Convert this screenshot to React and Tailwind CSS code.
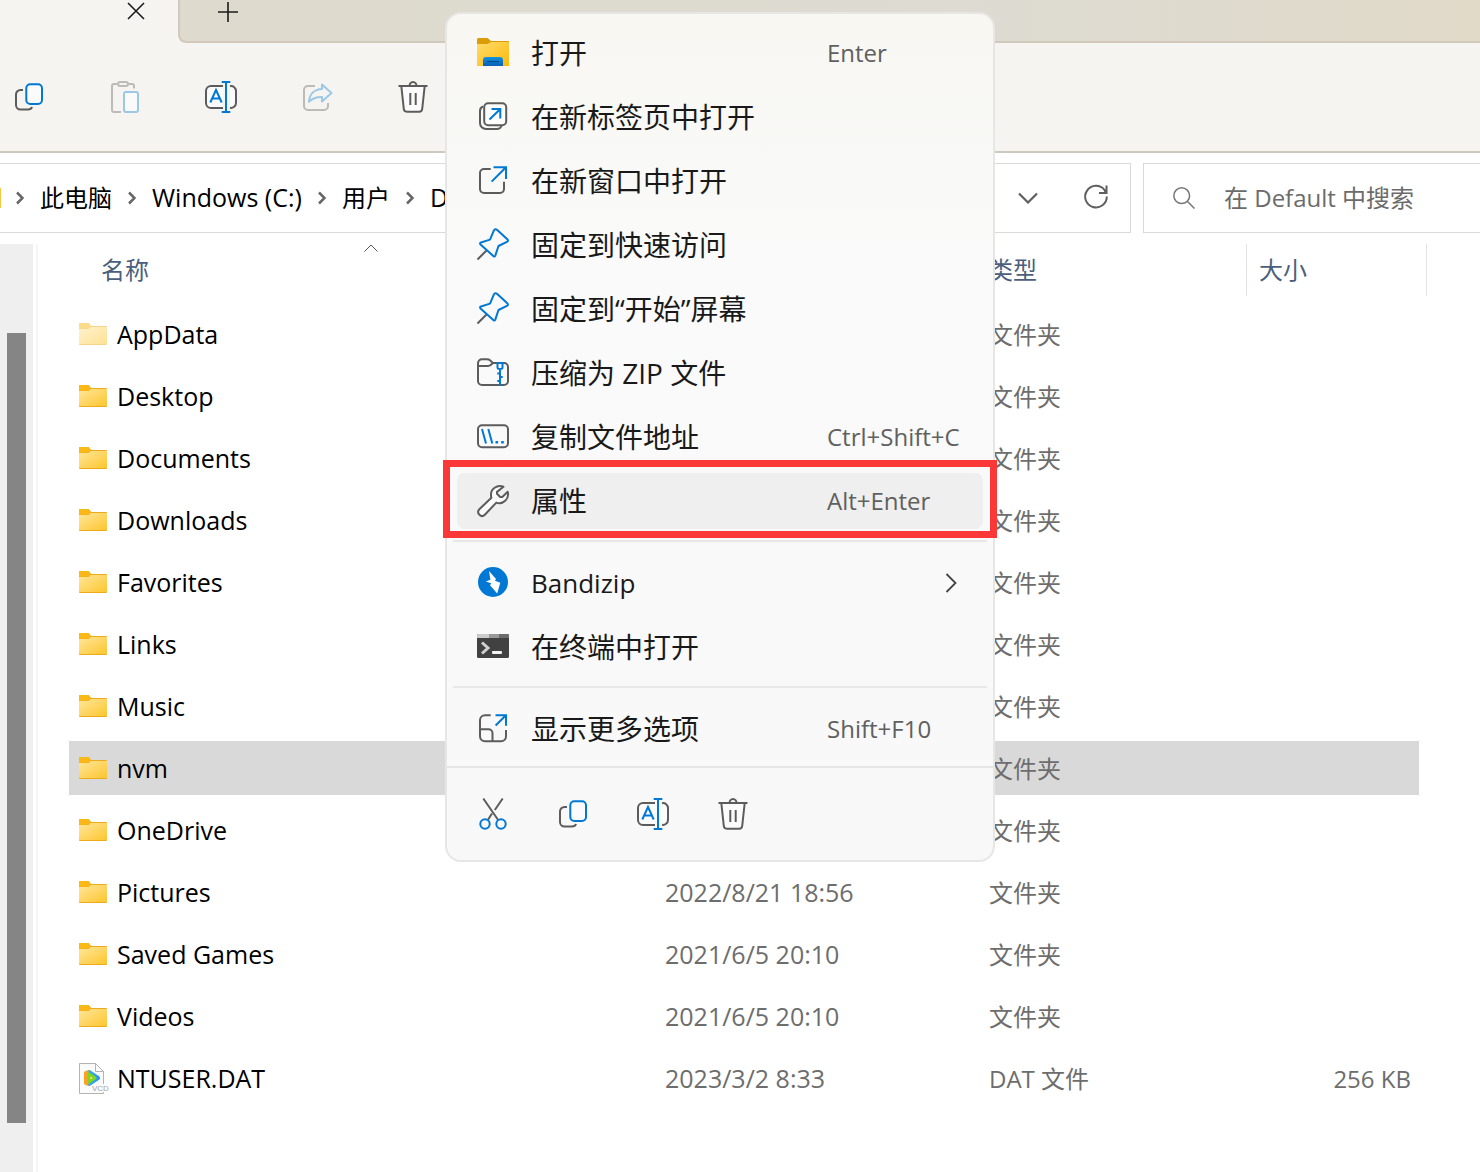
import { useState } from "react";

const GREY = "#5c5c5c";
const BLUE = "#0078d4";

function Icon({ children, className = "size-8" }) {
  return (
    <svg
      viewBox="0 0 32 32"
      className={`${className} shrink-0 overflow-visible`}
      fill="none"
      stroke={GREY}
      strokeWidth="2"
      aria-hidden="true"
    >
      {children}
    </svg>
  );
}

const CopyIcon = () => (
  <Icon>
    <path d="M10 9H7.500a4.500 4.500 0 0 0-4.500 4.500V24a4.500 4.500 0 0 0 4.500 4.500H15c2 0 3.500-1 4-2.500" />
    <rect x="13.300" y="3.300" width="15.700" height="19.700" rx="4" stroke={BLUE} fill="#fbfbfb" />
  </Icon>
);

const PasteIcon = () => (
  <Icon>
    <g stroke="#bdbbb8">
      <path d="M8 3H5a2 2 0 0 0-2 2v24a2 2 0 0 0 2 2h7M20 3h3a2 2 0 0 1 2 2v2.500" />
      <rect x="9" y="1" width="10" height="4" rx="2" />
    </g>
    <rect x="15" y="11" width="14" height="20" rx="2" stroke="#9cc8e8" fill="#fafafa" />
  </Icon>
);

const RenameIcon = () => (
  <Icon>
    <path d="M18 5H6a5 5 0 0 0-5 5v12a5 5 0 0 0 5 5h12M25 5.200a5 5 0 0 1 6 5V22a5 5 0 0 1-6 4.800" fill="#fbfbfb" />
    <g stroke={BLUE}>
      <path d="M5.300 21.500 11 9l5.700 12.500M7.300 17.500h7.400" />
      <path d="M21 1v30M16.700 1h8.600M16.700 31h8.600" />
    </g>
  </Icon>
);

const ShareIcon = () => (
  <Icon>
    <path d="M14 5H7a4 4 0 0 0-4 4v16a4 4 0 0 0 4 4h16a4 4 0 0 0 4-4v-3" stroke="#bdbbb8" />
    <path
      d="M21 3.500 30.500 12 21 20.500V16c-5.500-.3-9.500 1.500-13 4.800C8.500 13.500 13 8.300 21 8z"
      stroke="#9cc8e8"
      strokeLinejoin="round"
    />
  </Icon>
);

const TrashIcon = () => (
  <Icon>
    <path d="m4.300 5 2.500 23a3 3 0 0 0 3 2.700h12.400a3 3 0 0 0 3-2.700l2.500-23" fill="#fbfbfb" />
    <path d="M1.500 5h29M12.500 5a3.500 4 0 0 1 7 0M13.300 12v12M18.700 12v12" />
  </Icon>
);

const CutIcon = () => (
  <Icon>
    <path d="m6.300.500 14.700 21.300M25.700.500 17.800 12M15 15.500l-4 6.300" />
    <g stroke={BLUE}>
      <circle cx="8" cy="26" r="4.700" />
      <circle cx="24" cy="26" r="4.700" />
    </g>
  </Icon>
);

const ExplorerIcon = () => (
  <Icon>
    <defs>
      <linearGradient id="explorer" x1="0" y1="0" x2="1" y2="1">
        <stop offset="0" stopColor="#ffdc6d" />
        <stop offset="1" stopColor="#fdb90a" />
      </linearGradient>
      <linearGradient id="tray" x1="0" y1="0" x2="0" y2="1">
        <stop offset="0" stopColor="#1592df" />
        <stop offset="1" stopColor="#0661b4" />
      </linearGradient>
    </defs>
    <g stroke="none">
      <path d="M0 2.500A1.500 1.500 0 0 1 1.500 1H10.500L14 4H31a1 1 0 0 1 1 1v4H0z" fill="#dd9c05" />
      <path d="M0 7h10.500L14 5h17a1 1 0 0 1 1 1v23H0z" fill="url(#explorer)" />
      <path d="M6 29v-6a3 3 0 0 1 3-3h14a3 3 0 0 1 3 3v6z" fill="url(#tray)" />
      <path d="M10 24h12v1.200H10z" fill="#074f91" />
    </g>
  </Icon>
);

const NewTabIcon = () => (
  <Icon>
    <path d="M6 5.500C4 6.300 3 7.800 3 10v12a6 6 0 0 0 6 6h11c2 0 3.700-1 4.500-3" />
    <rect x="7.200" y="2.200" width="22" height="22" rx="4" fill="#fdfdfd" />
    <path d="M12.500 18.500 23.300 8M14.500 8h8.800v9.500" stroke={BLUE} />
  </Icon>
);

const NewWindowIcon = () => (
  <Icon>
    <path d="M13.700 4H7a4 4 0 0 0-4 4v16a4 4 0 0 0 4 4h16a4 4 0 0 0 4-4v-7.300" />
    <path d="M14.600 16.600 29 2.300M16.500 2.200H29V14" stroke={BLUE} />
  </Icon>
);

const PinIcon = () => (
  <Icon>
    <path d="m.500 30.500 9-9" />
    <path
      d="M20 .8 30.300 10.300c1 1 .8 2-.4 2.500L21.500 17 18.300 26.600c-.4 1-1.200 1.200-2 .4L3.500 15.500c-.8-.8-.5-1.700.5-2L13 10.600l3.800-9c.7-1.500 2-1.800 3.200-.8z"
      stroke={BLUE}
      strokeLinejoin="round"
    />
  </Icon>
);

const ZipIcon = () => (
  <Icon>
    <path d="M1 6v18a4 4 0 0 0 4 4h22a4 4 0 0 0 4-4V10a4 4 0 0 0-4-4H16l-3-2.800C12 2.400 11.500 2.200 10 2.200H5a4 4 0 0 0-4 4z" />
    <path d="M1 9h10c1.500 0 2-.3 3-1.200L16 6" />
    <g stroke={BLUE}>
      <path d="M20.500 5v5.500c0 1 .8 1.500 2.500 1.500s2.500-.5 2.500-1.500V5M20 6h6M23 12v17" />
      <path d="M20.300 16.500H23M23 20h2.700M20.300 24H23" />
    </g>
  </Icon>
);

const CopyPathIcon = () => (
  <Icon>
    <rect x="1" y="4.200" width="30" height="22" rx="4" />
    <path d="m5 8 4 14.500M11.300 8l4 14.500" stroke={BLUE} />
    <path d="M18.500 21.300h2.600M24.200 21.300h2.600" stroke={BLUE} strokeWidth="2.600" />
  </Icon>
);

const WrenchIcon = () => (
  <Icon>
    <path
      d="M26.500 1.800C20 -.8 13.500 4 14 10.300c0 1 .1 1.700.4 2.500L2.300 24.300c-3.300 3.600 1.800 9 5.500 5.500L19.300 17.600C26 20 32.600 14 30.700 6.700L25.300 12h-2.100L20 8.800V6.900z"
      fill="#fbfbfb"
      strokeLinejoin="round"
    />
  </Icon>
);

const BandizipIcon = () => (
  <Icon>
    <circle cx="16" cy="15" r="15" fill={BLUE} stroke="none" />
    <path d="M12 4 19 12l-1 1.800 5.300 2L20.200 26.500 13 18.300l1.200-2L8.800 14.500l4.600-1.700z" fill="#fff" stroke="none" />
  </Icon>
);

const TerminalIcon = () => (
  <Icon>
    <g stroke="none">
      <rect y="3" width="32" height="24" rx="1.500" fill="#414141" />
      <path d="M0 7V4.500A1.500 1.500 0 0 1 1.500 3H12v4z" fill="#cbcbcb" />
      <path d="M12 3h10v4H12z" fill="#999" />
      <path d="M22 3h8.500A1.500 1.500 0 0 1 32 4.500V7H22z" fill="#6c6c6c" />
      <rect x="15" y="20" width="10" height="3" rx="1" fill="#f2f2f2" />
    </g>
    <path d="m5 11.500 6 5.500-6 5.500" stroke="#d0d0d0" strokeWidth="3" />
  </Icon>
);

const MoreIcon = () => (
  <Icon>
    <path d="M13.700 2.200H8a5 5 0 0 0-5 5v16a5 5 0 0 0 5 5h16a5 5 0 0 0 5-5V17M3 16.300h8.500a4 4 0 0 1 4 4v8" />
    <path d="M18.600 12.500 29 2.300M18.500 2.200H29v10.500" stroke={BLUE} />
  </Icon>
);

function Folder({ faded }) {
  return (
    <svg viewBox="0 0 28 22" className={faded ? "h-[22px] w-7 shrink-0 opacity-50" : "h-[22px] w-7 shrink-0"} aria-hidden="true">
      <defs>
        <linearGradient id="folder" x1="0" y1="0" x2="1" y2="1">
          <stop offset="0" stopColor="#ffe69a" />
          <stop offset="1" stopColor="#fdc62f" />
        </linearGradient>
      </defs>
      <path d="M0 1a1 1 0 0 1 1-1h8.500L12 3h15a1 1 0 0 1 1 1v17a1 1 0 0 1-1 1H1a1 1 0 0 1-1-1z" fill="#eeaa1d" />
      <path d="M0 1a1 1 0 0 1 1-1h8.500L12 3 9.500 5.500H0z" fill="#fbb917" />
      <path d="M0 6h9.500L12 4h16v16a1 1 0 0 1-1 1H1a1 1 0 0 1-1-1z" fill="url(#folder)" />
    </svg>
  );
}

function VcdFile() {
  return (
    <svg viewBox="0 0 28 31" className="h-[31px] w-7 shrink-0 overflow-visible" fill="none" aria-hidden="true">
      <defs>
        <linearGradient id="play" gradientUnits="userSpaceOnUse" x1="5" y1="15" x2="21" y2="15">
          <stop offset="0" stopColor="#ff9a1c" />
          <stop offset="0.200" stopColor="#ffa52c" />
          <stop offset="0.350" stopColor="#2cb0e6" />
          <stop offset="1" stopColor="#2a8cff" />
        </linearGradient>
      </defs>
      <path d="M24.500 21V8.500L16.500.500H.500v30h24V29" fill="#fbfbfb" stroke="#b3b3b3" />
      <path d="M16.500.500v8h8" stroke="#b3b3b3" />
      <path d="M7 10v10l3 1 9-6-9-6z" fill="url(#play)" stroke="url(#play)" strokeWidth="4" strokeLinejoin="round" />
      <path d="M10 11v8l6-4z" fill="#fff" stroke="#84d41f" strokeWidth="3" strokeLinejoin="round" />
      <text x="13" y="28" fontSize="8" fill="#a3a3a3" fontFamily="Liberation Sans, sans-serif">VCD</text>
    </svg>
  );
}

const Crumb = () => (
  <svg viewBox="0 0 8 14" className="h-[14px] w-2 shrink-0" fill="none" stroke="#666" strokeWidth="2.500" aria-hidden="true">
    <path d="m1 1.500 5.500 5.500L1 12.500" />
  </svg>
);

const files = [
  { name: "AppData", faded: true },
  { name: "Desktop" },
  { name: "Documents" },
  { name: "Downloads" },
  { name: "Favorites" },
  { name: "Links" },
  { name: "Music" },
  { name: "nvm" },
  { name: "OneDrive" },
  { name: "Pictures", date: "2022/8/21 18:56" },
  { name: "Saved Games", date: "2021/6/5 20:10" },
  { name: "Videos", date: "2021/6/5 20:10" },
  { name: "NTUSER.DAT", date: "2023/3/2 8:33", type: "DAT 文件", size: "256 KB" },
];

const tools = [
  { label: "复制", icon: CopyIcon },
  { label: "粘贴", icon: PasteIcon, disabled: true },
  { label: "重命名", icon: RenameIcon },
  { label: "共享", icon: ShareIcon, disabled: true },
  { label: "删除", icon: TrashIcon },
];

const quickActions = [
  { label: "剪切", icon: CutIcon },
  { label: "复制", icon: CopyIcon },
  { label: "重命名", icon: RenameIcon },
  { label: "删除", icon: TrashIcon },
];

function MenuItem({ icon: ItemIcon, label, keys, active, submenu, latin }) {
  return (
    <li className="relative flex h-16 items-center">
      <button
        className={`mx-[10px] flex h-14 w-full items-center rounded-lg pl-5 text-left ${active ? "bg-[#efefef]" : ""}`}
      >
        <ItemIcon />
        <span className={latin ? "ml-[22px] flex-1 text-[26px]" : "ml-[22px] flex-1 pt-[2px] text-[28px]"}>{label}</span>
        {keys && <span className="w-[156px] whitespace-nowrap text-2xl text-[#606060]">{keys}</span>}
        {submenu && (
          <svg viewBox="0 0 12 20" className="mr-[26px] h-5 w-3" fill="none" stroke="#444" strokeWidth="1.800" aria-hidden="true">
            <path d="m1.500 1 9 9-9 9" />
          </svg>
        )}
      </button>
      {active && <div className="pointer-events-none absolute -inset-x-1 -top-[9px] -bottom-[5px] border-[7px] border-[#fb3838]" />}
    </li>
  );
}

function ContextMenu() {
  return (
    <div className="absolute top-3 left-[445px] w-[550px] rounded-2xl border-2 border-[#e6e6e5] bg-linear-to-b from-[#f8f7f2] via-[#fafafa] via-30% to-[#f8f8f8] text-[#191919]">
      <ul className="pt-[7px] pb-[5px]">
        <MenuItem icon={ExplorerIcon} label="打开" keys="Enter" />
        <MenuItem icon={NewTabIcon} label="在新标签页中打开" />
        <MenuItem icon={NewWindowIcon} label="在新窗口中打开" />
        <MenuItem icon={PinIcon} label="固定到快速访问" />
        <MenuItem icon={PinIcon} label="固定到“开始”屏幕" />
        <MenuItem icon={ZipIcon} label="压缩为 ZIP 文件" />
        <MenuItem icon={CopyPathIcon} label="复制文件地址" keys="Ctrl+Shift+C" />
        <MenuItem icon={WrenchIcon} label="属性" keys="Alt+Enter" active />
        <li className="mx-[6px] mt-[7px] mb-[9px] h-[2px] bg-[#e8e8e8]" />
        <MenuItem icon={BandizipIcon} label="Bandizip" submenu latin />
        <MenuItem icon={TerminalIcon} label="在终端中打开" />
        <li className="mx-[6px] mt-[7px] mb-[9px] h-[2px] bg-[#e8e8e8]" />
        <MenuItem icon={MoreIcon} label="显示更多选项" keys="Shift+F10" />
      </ul>
      <div className="flex h-[94px] items-center gap-12 border-t-2 border-[#e6e6e6] pl-[30px]">
        {quickActions.map(({ label, icon: ActionIcon }) => (
          <button key={label} aria-label={label}>
            <ActionIcon />
          </button>
        ))}
      </div>
    </div>
  );
}

export default function App() {
  const [selected, setSelected] = useState("nvm");
  const [query, setQuery] = useState("");

  return (
    <div className="relative flex min-h-screen flex-col overflow-hidden bg-white font-['Open_Sans','Noto_Sans_CJK_SC',sans-serif] text-2xl text-black">
      <header className="border-b-2 border-[#cfc8bc] bg-[#f5f4f0]">
        <div className="flex h-[43px]">
          <div className="flex w-[178px] shrink-0 items-start justify-end pt-[2px] pr-[33px]">
            <button aria-label="关闭标签页">
              <svg viewBox="0 0 18 18" className="size-[18px]" fill="none" stroke="#1b1b1b" strokeWidth="1.600">
                <path d="m1 1 16 16M17 1 1 17" />
              </svg>
            </button>
          </div>
          <div className="flex flex-1 items-start rounded-bl-lg border-b-2 border-l-2 border-[#d0c9bc] bg-linear-to-r from-[#dedacd] via-[#dddbd2] via-60% to-[#e1dac9] pt-[2px] pl-[38px]">
            <button aria-label="新建标签页">
              <svg viewBox="0 0 20 20" className="size-5" fill="none" stroke="#1b1b1b" strokeWidth="1.600">
                <path d="M10 0v20M0 10h20" />
              </svg>
            </button>
          </div>
        </div>
        <div className="flex h-[108px] items-center gap-16 pl-[13px]">
          {tools.map(({ label, icon: ToolIcon, disabled }) => (
            <button key={label} aria-label={label} disabled={disabled}>
              <ToolIcon />
            </button>
          ))}
        </div>
      </header>

      <div className="flex gap-3 pt-[10px]">
        <nav className="flex h-[70px] flex-1 items-center gap-4 border-y border-r border-[#d9d9d9] pr-[22px]">
          <div className="-mr-px h-5 w-px bg-[#fcc843]" />
          <Crumb />
          <a href="#pc">此电脑</a>
          <Crumb />
          <a href="#c" className="text-[25px]">Windows (C:)</a>
          <Crumb />
          <a href="#users">用户</a>
          <Crumb />
          <a href="#default" className="text-[25px]">Default</a>
          <button aria-label="以前的位置" className="mr-[30px] ml-auto">
            <svg viewBox="0 0 20 12" className="h-3 w-5" fill="none" stroke="#5f5f5f" strokeWidth="2.200">
              <path d="m1 1.500 9 9 9-9" />
            </svg>
          </button>
          <button aria-label="刷新">
            <svg viewBox="0 0 24 24" className="size-6 overflow-visible" fill="none" stroke="#5f5f5f" strokeWidth="2">
              <path d="M22.800 10.500A10.800 10.800 0 1 1 20.500 4L22 7M22.500-.5V7h-7.500" />
            </svg>
          </button>
        </nav>
        <label className="flex h-[70px] w-[337px] items-center border-y border-l border-[#d9d9d9] pl-[29px]">
          <svg viewBox="0 0 22 22" className="size-[22px] shrink-0" fill="none" stroke="#777" strokeWidth="1.500" aria-hidden="true">
            <circle cx="8.700" cy="8.700" r="7.900" />
            <path d="m14.300 14.300 7.200 7.200" />
          </svg>
          <input
            aria-label="搜索"
            value={query}
            onChange={(e) => setQuery(e.target.value)}
            placeholder="在 Default 中搜索"
            className="ml-[29px] w-full min-w-0 outline-none placeholder:text-[#6b6b6b]"
          />
        </label>
      </div>

      <main className="flex flex-1 pt-[11px]">
        <div className="flex w-[33px] shrink-0 flex-col bg-[#efefef] pt-[89px] pr-[7px] pb-[49px] pl-[7px]">
          <div className="flex-1 bg-[#858585]" />
        </div>
        <div className="ml-[3px] w-[2px] shrink-0 bg-[#f5f5f5]" />
        <div className="flex-1 pr-[53px] pl-[31px]">
          <table className="w-full table-fixed">
            <thead>
              <tr className="h-[59px] text-left align-top text-[#4b5f7c]">
                <th className="relative w-[584px] p-0 font-normal">
                  <div className="flex h-[52px] items-center pl-8">名称</div>
                  <svg viewBox="0 0 14 8" className="absolute top-0 left-[295px] h-2 w-[14px]" fill="none" stroke="#555" aria-hidden="true">
                    <path d="m.500 7.500 6.500-6.500 6.500 6.500" />
                  </svg>
                </th>
                <th className="w-[324px] p-0" />
                <th className="p-0 font-normal">
                  <div className="flex h-[52px] items-center border-r border-[#e2e2e2] pl-3">类型</div>
                </th>
                <th className="w-[180px] p-0 font-normal">
                  <div className="flex h-[52px] items-center border-r border-[#e2e2e2] pl-3">大小</div>
                </th>
              </tr>
            </thead>
            <tbody>
              {files.map((file) => {
                const bg = file.name === selected ? "bg-[#d9d9d9]" : "";
                return (
                  <tr key={file.name} className="h-[62px] text-[#6d6d6d]" onClick={() => setSelected(file.name)}>
                    <td className="p-0">
                      <div className={`flex h-[54px] items-center gap-[10px] pl-[10px] text-[25px] text-black ${bg}`}>
                        {file.size ? <VcdFile /> : <Folder faded={file.faded} />}
                        <span className="pt-[2px]">{file.name}</span>
                      </div>
                    </td>
                    <td className="p-0">
                      <div className={`flex h-[54px] items-center pt-[2px] pl-3 text-[25px] ${bg}`}>{file.date}</div>
                    </td>
                    <td className="p-0">
                      <div className={`flex h-[54px] items-center pt-[2px] pl-3 ${bg}`}>{file.type || "文件夹"}</div>
                    </td>
                    <td className="p-0">
                      <div className={`mr-2 flex h-[54px] items-center justify-end pt-[2px] pr-2 ${bg}`}>{file.size}</div>
                    </td>
                  </tr>
                );
              })}
            </tbody>
          </table>
        </div>
      </main>

      <ContextMenu />
    </div>
  );
}
